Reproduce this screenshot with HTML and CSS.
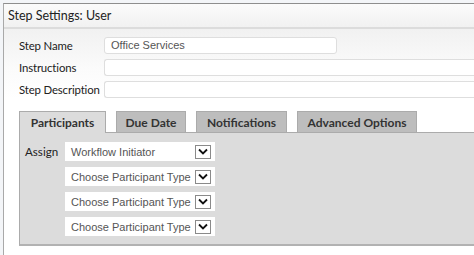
FILE: index.html
```html
<!DOCTYPE html>
<html lang="en">
<head>
    <meta charset="UTF-8">
    <title>Step Settings</title>
    <link rel="stylesheet" href="styles.css">
</head>
<body>
    <div class="dialog">
        <div class="title-bar">Step Settings: User</div>
        <div class="content">
            <div class="field-row">
                <label class="field-label">Step Name</label>
                <div class="text-input short">Office Services</div>
            </div>
            <div class="field-row">
                <label class="field-label">Instructions</label>
                <div class="text-input"></div>
            </div>
            <div class="field-row">
                <label class="field-label">Step Description</label>
                <div class="text-input"></div>
            </div>

            <div class="tabs">
                <div class="tab active">Participants</div>
                <div class="tab due">Due Date</div>
                <div class="tab notif">Notifications</div>
                <div class="tab adv">Advanced Options</div>
            </div>
            <div class="tab-panel">
                <div class="assign-row">
                    <span class="assign-label">Assign</span>
                    <div class="selects">
                        <div class="select-box"><span>Workflow Initiator</span><span class="arrow"><svg width="10" height="7" viewBox="0 0 10 7"><path d="M1 1.5 L5 5.5 L9 1.5" fill="none" stroke="#111" stroke-width="1.8"/></svg></span></div>
                        <div class="select-box"><span>Choose Participant Type</span><span class="arrow"><svg width="10" height="7" viewBox="0 0 10 7"><path d="M1 1.5 L5 5.5 L9 1.5" fill="none" stroke="#111" stroke-width="1.8"/></svg></span></div>
                        <div class="select-box"><span>Choose Participant Type</span><span class="arrow"><svg width="10" height="7" viewBox="0 0 10 7"><path d="M1 1.5 L5 5.5 L9 1.5" fill="none" stroke="#111" stroke-width="1.8"/></svg></span></div>
                        <div class="select-box"><span>Choose Participant Type</span><span class="arrow"><svg width="10" height="7" viewBox="0 0 10 7"><path d="M1 1.5 L5 5.5 L9 1.5" fill="none" stroke="#111" stroke-width="1.8"/></svg></span></div>
                    </div>
                </div>
            </div>
        </div>
    </div>
</body>
</html>
```

FILE: styles.css
```css
body {
    margin: 0;
    padding-top: 3px;
    background-color: #f3f5f8;
    font-family: 'Lato', 'Open Sans', sans-serif;
    color: #222;
    overflow: hidden;
}

.dialog {
    margin-left: 3px;
    border-left: 1px solid #a9a9a9;
    border-top: 1px solid #8e8e8e;
    background-color: #fff;
    height: 252px;
}

.title-bar {
    height: 23px;
    line-height: 24px;
    padding-left: 4px;
    font-size: 12.5px;
    color: #222;
    background: linear-gradient(#fbfbfb, #f1f1f1);
    border-bottom: 2px solid #dcdcdc;
}

.content {
    padding: 8px 0 0 15px;
    background: linear-gradient(#f1f1f1, #fbfbfb 40px, #fff 70px);
}

.field-row {
    display: flex;
    align-items: center;
    height: 17px;
    margin-bottom: 5px;
}

.field-label {
    flex-shrink: 0;
    width: 85px;
    white-space: nowrap;
    font-size: 11.4px;
    letter-spacing: -0.15px;
    color: #222;
}

.text-input {
    flex: 1;
    height: 15px;
    border: 1px solid #dedede;
    border-right: none;
    border-radius: 3px 0 0 3px;
    background-color: #fff;
    font-family: 'Liberation Sans', Arial, sans-serif;
    font-size: 11px;
    line-height: 15px;
    padding-left: 6px;
    color: #555;
}

.text-input.short {
    flex: none;
    width: 225px;
    border-right: 1px solid #dedede;
    border-radius: 3px;
}

.tabs {
    display: flex;
    gap: 10px;
    margin-top: 13px;
    height: 21px;
}

.tab {
    box-sizing: border-box;
    height: 21px;
    line-height: 21px;
    text-align: center;
    font-size: 12px;
    font-weight: bold;
    color: #333;
    background-color: #bdbdbd;
    border: 1px solid #ababab;
    border-bottom: none;
}

.tab.active {
    width: 87px;
    background-color: #dcdcdc;
    height: 22px;
    margin-bottom: -1px;
    position: relative;
    z-index: 1;
}

.tab.due { width: 70px; }
.tab.notif { width: 91px; }
.tab.adv { width: 120px; }

.tab-panel {
    box-sizing: border-box;
    height: 114px;
    background-color: #dcdcdc;
    border: 1px solid #ababab;
    border-bottom: 2px solid #b2b2b2;
    border-right: none;
    padding: 9px 0 0 5px;
}

.assign-row {
    display: flex;
}

.assign-label {
    width: 40px;
    font-size: 11.6px;
    line-height: 19px;
    color: #222;
}

.selects {
    display: flex;
    flex-direction: column;
    gap: 6px;
}

.select-box {
    display: flex;
    align-items: center;
    justify-content: space-between;
    width: 150px;
    height: 19px;
    background-color: #fff;
    font-family: 'Liberation Sans', Arial, sans-serif;
    font-size: 11px;
    color: #555;
    padding-left: 6px;
    box-sizing: border-box;
    padding-right: 4px;
}

.arrow {
    display: flex;
    align-items: center;
    justify-content: center;
    width: 14px;
    height: 12px;
    border: 1px solid #8a8a8a;
    background-color: #fff;
}
```
